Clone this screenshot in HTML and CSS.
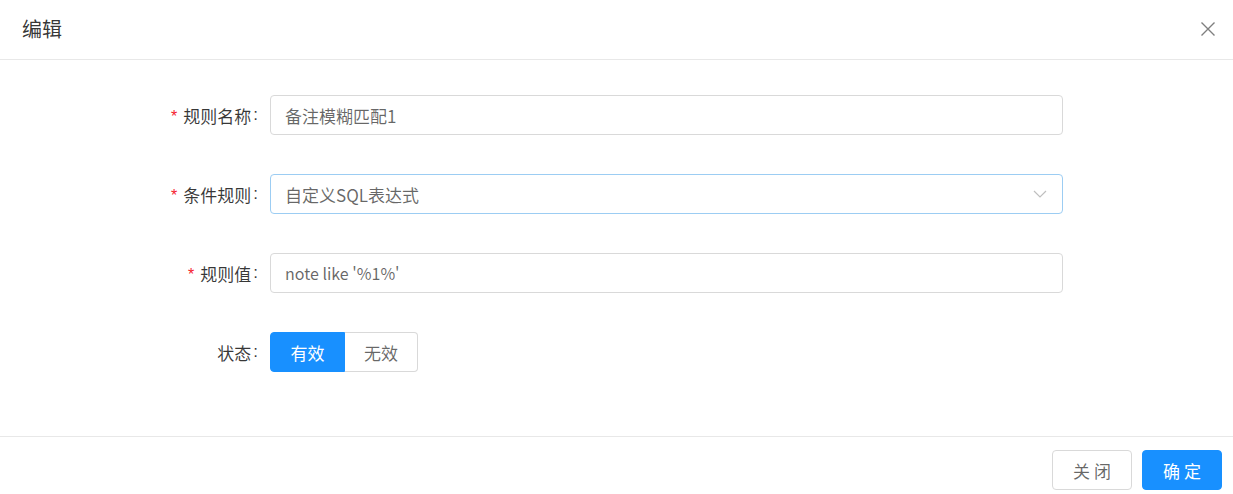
FILE: index.html
```html
<!DOCTYPE html>
<html lang="zh-CN">
<head>
<meta charset="utf-8">
<title>编辑</title>
<link rel="stylesheet" href="styles.css">
</head>
<body>
<div class="modal">
  <div class="modal-header">
    <div class="modal-title">编辑</div>
    <button class="modal-close" aria-label="Close">
      <svg width="16" height="16" viewBox="0 0 16 16"><path d="M1.5 1.5 L14.5 14.5 M14.5 1.5 L1.5 14.5" stroke="currentColor" stroke-width="1.4" fill="none"/></svg>
    </button>
  </div>
  <div class="modal-body">
    <form class="form">
      <label class="form-label required">规则名称</label>
      <div class="form-control"><div class="input">备注模糊匹配1</div></div>

      <label class="form-label required">条件规则</label>
      <div class="form-control">
        <div class="input select">
          <span>自定义SQL表达式</span>
          <svg class="arrow" width="14" height="8" viewBox="0 0 14 8"><path d="M1 1 L7 7 L13 1" stroke="currentColor" stroke-width="1.2" fill="none"/></svg>
        </div>
      </div>

      <label class="form-label required">规则值</label>
      <div class="form-control"><div class="input latin">note like '%1%'</div></div>

      <label class="form-label">状态</label>
      <div class="form-control">
        <div class="radio-group">
          <span class="radio-btn checked">有效</span>
          <span class="radio-btn">无效</span>
        </div>
      </div>
    </form>
  </div>
  <div class="modal-footer">
    <button class="btn">关 闭</button>
    <button class="btn btn-primary">确 定</button>
  </div>
</div>
</body>
</html>
```

FILE: styles.css
```css
* { box-sizing: border-box; }
html, body {
  margin: 0;
  padding: 0;
  background: #fff;
  font-family: "Noto Sans CJK SC", "Noto Sans", "Liberation Sans", sans-serif;
  color: rgba(0, 0, 0, 0.65);
}
.modal {
  width: 1233px;
  height: 494px;
  display: flex;
  flex-direction: column;
  overflow: hidden;
}
.modal-header {
  height: 60px;
  flex: none;
  border-bottom: 1px solid #e8e8e8;
  display: flex;
  align-items: center;
  justify-content: space-between;
  padding: 0 17px 0 22px;
}
.modal-title {
  font-size: 20px;
  line-height: 24px;
  color: rgba(0, 0, 0, 0.8);
  margin-top: -2px;
}
.modal-close {
  border: 0;
  background: transparent;
  padding: 0;
  width: 16px;
  height: 16px;
  color: rgba(0, 0, 0, 0.5);
  display: flex;
  margin-top: -2px;
}
.modal-body {
  height: 376px;
  flex: none;
  padding-top: 35px;
}
.form {
  display: grid;
  grid-template-columns: 270px 793px;
  grid-auto-rows: 40px;
  row-gap: 39px;
  margin: 0;
}
.form-label {
  display: flex;
  align-items: center;
  justify-content: flex-end;
  font-size: 17px;
  color: rgba(0, 0, 0, 0.78);
  white-space: nowrap;
}
.form-label::after {
  content: ":";
  font-family: "Liberation Sans", sans-serif;
  margin: 0 12px 0 2px;
}
.form-label.required::before {
  content: "*";
  color: #f5222d;
  font-family: "Liberation Sans", sans-serif;
  font-size: 16px;
  margin-right: 6px;
  margin-top: 4px;
}
.form-control {
  display: flex;
  align-items: stretch;
}
.input {
  width: 100%;
  height: 40px;
  border: 1px solid #d9d9d9;
  border-radius: 4px;
  padding: 0 14px;
  display: flex;
  align-items: center;
  font-size: 17px;
  color: rgba(0, 0, 0, 0.6);
}
.input.latin {
  font-size: 16px;
}
.select {
  border-color: #9ccdf3;
  justify-content: space-between;
  padding-right: 15px;
}
.arrow {
  color: #bfbfbf;
}
.radio-group {
  display: flex;
  height: 40px;
}
.radio-btn {
  display: flex;
  align-items: center;
  justify-content: center;
  font-size: 17px;
  height: 40px;
  border: 1px solid #d9d9d9;
  color: rgba(0, 0, 0, 0.6);
  background: #fff;
}
.radio-btn:first-child {
  width: 75px;
  border-radius: 4px 0 0 4px;
}
.radio-btn:last-child {
  width: 73px;
  border-left: 0;
  border-radius: 0 4px 4px 0;
}
.radio-btn.checked {
  background: #1890ff;
  border-color: #1890ff;
  color: #fff;
}
.modal-footer {
  flex: 1;
  border-top: 1px solid #e8e8e8;
  display: flex;
  justify-content: flex-end;
  align-items: flex-start;
  gap: 10px;
  padding: 13px 11px 0 0;
}
.btn {
  width: 80px;
  height: 40px;
  border: 1px solid #d9d9d9;
  border-radius: 4px;
  background: #fff;
  font-family: inherit;
  font-size: 17px;
  color: rgba(0, 0, 0, 0.6);
  padding: 0;
}
.btn-primary {
  background: #1890ff;
  border-color: #1890ff;
  color: #fff;
}
```
